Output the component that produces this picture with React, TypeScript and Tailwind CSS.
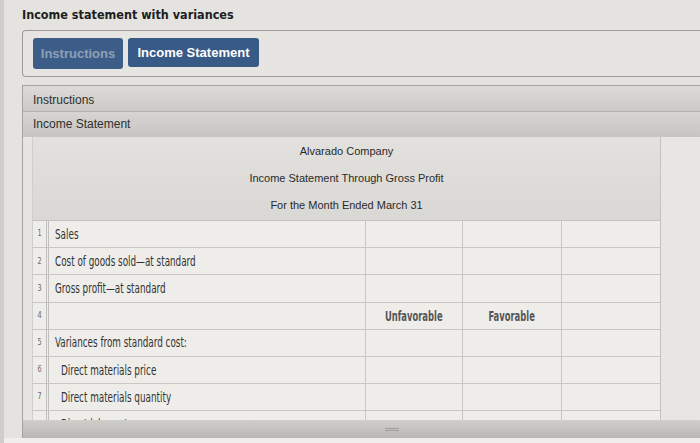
import React from "react";

const rows: { n: string; label: string; indent?: boolean; c1?: string; c2?: string }[] = [
  { n: "1", label: "Sales" },
  { n: "2", label: "Cost of goods sold\u2014at standard" },
  { n: "3", label: "Gross profit\u2014at standard" },
  { n: "4", label: "", c1: "Unfavorable", c2: "Favorable" },
  { n: "5", label: "Variances from standard cost:" },
  { n: "6", label: "Direct materials price", indent: true },
  { n: "7", label: "Direct materials quantity", indent: true },
  { n: "8", label: "Direct labor rate", indent: true },
];

const narrow = {
  fontFamily: '"DejaVu Sans Condensed", "DejaVu Sans", Roboto, sans-serif',
};

export default function App() {
  return (
    <div
      className="w-[700px] h-[443px] overflow-hidden bg-[#e4e3df] flex flex-col border-l-4 border-[#cfcecb]"
      style={{ fontFamily: '"Liberation Sans", Arial, sans-serif' }}
    >
      <div
        className="pl-[18px] pt-[6px] h-[30px] text-[12.5px] font-bold text-[#1e1e1e]"
        style={{ fontFamily: '"DejaVu Sans", Verdana, sans-serif' }}
      >
        <span className="inline-block whitespace-nowrap scale-x-[0.9] origin-left">Income statement with variances</span>
      </div>
      <div className="ml-[18px] h-[47px] shrink-0 border border-r-0 border-[#9c9b97] rounded-tl-[4px] rounded-bl-[4px] flex items-start gap-[5px] pl-[10px] pt-[7px] bg-[#e6e5e1]">
        <div className="w-[90px] h-[31px] rounded-[3px] bg-[#3c5d88] flex items-center justify-center text-[13px] font-bold text-[#8ea1b8]">
          Instructions
        </div>
        <div className="w-[131px] h-[29px] rounded-[3px] bg-[#385a86] flex items-center justify-center text-[13px] font-bold text-white">
          Income Statement
        </div>
      </div>
      <div className="ml-[18px] mt-[8px] flex-1 border-l border-t border-[#a3a29e] flex flex-col overflow-hidden">
        <div className="h-[26px] shrink-0 flex items-center pl-[10px] pt-[3px] text-[12px] text-[#2f2f2f] bg-gradient-to-b from-[#dcdbd7] to-[#cbcac6] border-b border-[#b3b2ae]">
          Instructions
        </div>
        <div className="h-[25px] shrink-0 flex items-center pl-[10px] pb-[1px] text-[12px] text-[#2f2f2f] bg-gradient-to-b from-[#d6d5d1] to-[#c6c5c1]">
          Income Statement
        </div>
        <div className="flex-1 flex overflow-hidden bg-[#e9e8e4]">
          <div className="w-[10px] shrink-0 bg-[#e6e5e1] border-r border-[#cfceca]" />
          <div className="w-[628px] shrink-0 flex flex-col border-r border-[#c4c3bf]">
            <div className="h-[84px] shrink-0 bg-gradient-to-b from-[#e2e1dd] to-[#d9d8d4] flex flex-col items-center text-[11px] text-[#2a2a2a] pt-[7px] gap-[13px] leading-[14px] border-b border-[#c4c3bf]">
              <div>Alvarado Company</div>
              <div>Income Statement Through Gross Profit</div>
              <div>For the Month Ended March 31</div>
            </div>
            {rows.map((r) => (
              <div key={r.n} className="h-[27.2px] shrink-0 flex border-b border-[#c8c7c3] bg-[#eeede9]" style={narrow}>
                <div className="w-[16px] shrink-0 flex items-center justify-center text-[9px] text-[#6a6a6a] border-r-[3px] border-double border-[#c0bfbb]">
                  <span className="inline-block scale-x-[0.8]">{r.n}</span>
                </div>
                <div
                  className={`w-[317px] shrink-0 flex items-center text-[14px] text-[#333] border-r border-[#c8c7c3] ${
                    r.indent ? "pl-[12px]" : "pl-[6px]"
                  }`}
                >
                  <span className="inline-block whitespace-nowrap scale-x-[0.7] origin-left">{r.label}</span>
                </div>
                <div className="w-[97px] shrink-0 flex items-center justify-center text-[13.5px] font-bold text-[#555] border-r border-[#c8c7c3]">
                  <span className="inline-block whitespace-nowrap scale-x-[0.69]">{r.c1}</span>
                </div>
                <div className="w-[99px] shrink-0 flex items-center justify-center text-[13.5px] font-bold text-[#555] border-r border-[#c8c7c3]">
                  <span className="inline-block whitespace-nowrap scale-x-[0.69]">{r.c2}</span>
                </div>
                <div className="flex-1" />
              </div>
            ))}
          </div>
          <div className="flex-1 bg-[#e7e6e2]" />
        </div>
        <div className="h-[18px] shrink-0 bg-gradient-to-b from-[#cfceca] to-[#b9b8b4] flex items-center justify-center">
          <div className="ml-[60px] w-[14px] h-[3px] border-y border-[#9e9d99]" />
        </div>
      </div>
      <div className="h-[5px] shrink-0 bg-[#efeeeb]" />
    </div>
  );
}
